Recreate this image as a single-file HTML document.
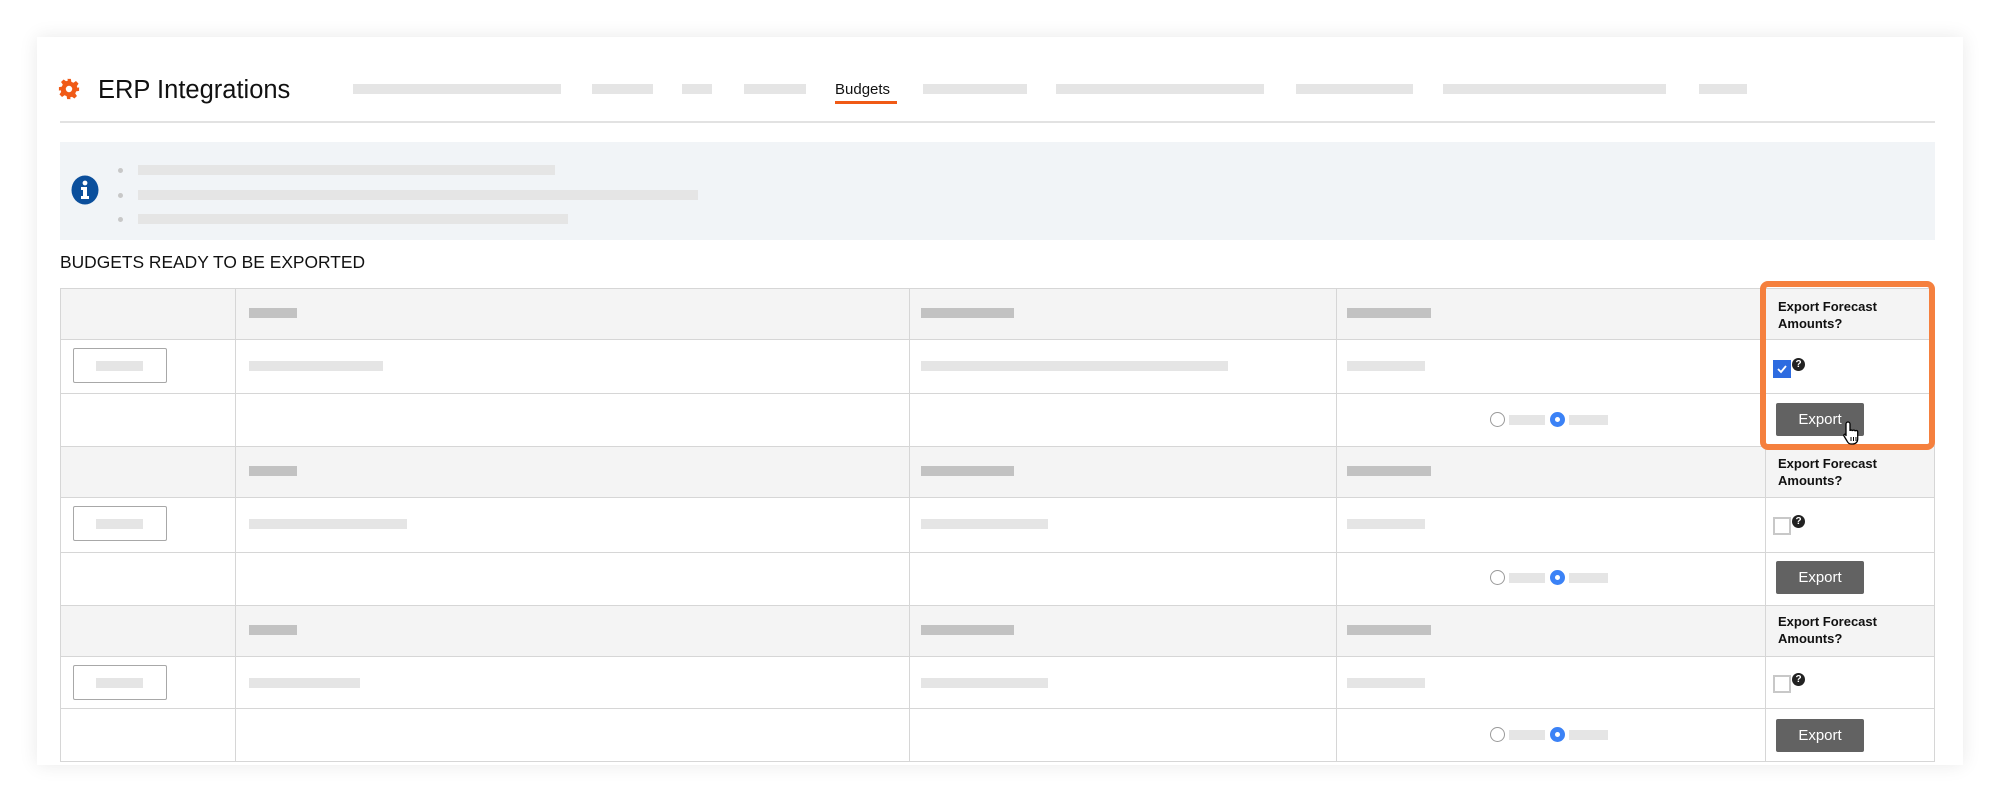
<!DOCTYPE html>
<html><head><meta charset="utf-8"><style>
*{margin:0;padding:0;box-sizing:border-box}
body{width:2000px;height:802px;background:#fff;position:relative;overflow:hidden;font-family:"Liberation Sans",Arial,sans-serif}
.a{position:absolute}
.card{left:37px;top:37px;width:1926px;height:728px;background:#fff;box-shadow:0 0 18px rgba(0,0,0,.09)}
.nb{height:10px;top:84px;background:#e5e5e5}
.lb{background:#e5e5e5;height:10px}
.db{background:#c2c2c2;height:10px}
.hl{background:#d6d6d6;height:1px}
.vl{background:#d6d6d6;width:1px;top:288px;height:473px}
.gr{background:#f4f4f4}
.btn0{width:94px;height:35px;border:1px solid #a8a8a8;border-radius:2px;background:#fff}
.eh{font-size:13px;font-weight:bold;line-height:17px;color:#111;left:1778px}
.cb{left:1773px;width:18px;height:18px;border:2px solid #c8c8c8;background:#fff}
.q{width:13px;height:13px;border-radius:50%;background:#222;color:#fff;font-size:10px;font-weight:bold;text-align:center;line-height:13px;left:1792px}
.ex{left:1776px;width:88px;height:33px;background:#626262;color:#fff;font-size:15px;text-align:center;line-height:33px;border-radius:2px}
.r1{left:1490px;width:15px;height:15px;border-radius:50%;border:1.5px solid #9a9a9a;background:#fff}
.r2{left:1550px;width:15px;height:15px;border-radius:50%;background:#3b82f6}
.r2:after{content:"";position:absolute;left:5px;top:5px;width:5px;height:5px;border-radius:50%;background:#fff}
</style></head><body>
<div class="a card"></div>
<svg class="a" style="left:58px;top:78px" width="22" height="22" viewBox="0 0 24 24"><path fill="#f05a16" d="M10 1h4l.6 3.2 2.3 1 2.7-1.9 2.8 2.8-1.9 2.7 1 2.3L23 10v4l-3.2.6-1 2.3 1.9 2.7-2.8 2.8-2.7-1.9-2.3 1L14 23h-4l-.6-3.2-2.3-1-2.7 1.9-2.8-2.8 1.9-2.7-1-2.3L1 14v-4l3.2-.6 1-2.3-1.9-2.7 2.8-2.8 2.7 1.9 2.3-1zM12 8.5a3.5 3.5 0 100 7 3.5 3.5 0 000-7z"/></svg>
<div class="a" style="left:98px;top:76px;font-size:25.5px;color:#111">ERP Integrations</div>
<div class="a nb" style="left:353px;width:208px"></div>
<div class="a nb" style="left:592px;width:61px"></div>
<div class="a nb" style="left:682px;width:30px"></div>
<div class="a nb" style="left:744px;width:62px"></div>
<div class="a" style="left:835px;top:81px;font-size:15px;color:#111">Budgets</div>
<div class="a" style="left:835px;top:101px;width:62px;height:3px;background:#f05a16"></div>
<div class="a nb" style="left:923px;width:104px"></div>
<div class="a nb" style="left:1056px;width:208px"></div>
<div class="a nb" style="left:1296px;width:117px"></div>
<div class="a nb" style="left:1443px;width:223px"></div>
<div class="a nb" style="left:1699px;width:48px"></div>
<div class="a" style="left:60px;top:121px;width:1875px;height:2px;background:#e2e2e2"></div>
<div class="a" style="left:60px;top:142px;width:1875px;height:98px;background:#f1f4f7"></div>
<svg class="a" style="left:71px;top:175px" width="28" height="30" viewBox="0 0 28 30"><ellipse cx="14" cy="15" rx="13.5" ry="14.5" fill="#0b4f9c"/><circle cx="14" cy="8" r="2.4" fill="#fff"/><path d="M10 12h6v9h2v3h-8v-3h2v-6h-2z" fill="#fff"/></svg>
<div class="a" style="left:118px;top:168px;width:5px;height:5px;border-radius:50%;background:#c8c8c8"></div>
<div class="a" style="left:118px;top:193px;width:5px;height:5px;border-radius:50%;background:#c8c8c8"></div>
<div class="a" style="left:118px;top:217px;width:5px;height:5px;border-radius:50%;background:#c8c8c8"></div>
<div class="a lb" style="left:138px;top:165px;width:417px"></div>
<div class="a lb" style="left:138px;top:190px;width:560px"></div>
<div class="a lb" style="left:138px;top:214px;width:430px"></div>
<div class="a" style="left:60px;top:252px;font-size:17.4px;color:#111">BUDGETS READY TO BE EXPORTED</div>
<div class="a gr" style="left:60px;top:288px;width:1875px;height:51px"></div>
<div class="a gr" style="left:60px;top:446px;width:1875px;height:51px"></div>
<div class="a gr" style="left:60px;top:605px;width:1875px;height:51px"></div>
<div class="a hl" style="left:60px;top:288px;width:1875px"></div>
<div class="a hl" style="left:60px;top:339px;width:1875px"></div>
<div class="a hl" style="left:60px;top:393px;width:1875px"></div>
<div class="a hl" style="left:60px;top:446px;width:1875px"></div>
<div class="a hl" style="left:60px;top:497px;width:1875px"></div>
<div class="a hl" style="left:60px;top:552px;width:1875px"></div>
<div class="a hl" style="left:60px;top:605px;width:1875px"></div>
<div class="a hl" style="left:60px;top:656px;width:1875px"></div>
<div class="a hl" style="left:60px;top:708px;width:1875px"></div>
<div class="a hl" style="left:60px;top:761px;width:1875px"></div>
<div class="a vl" style="left:60px"></div>
<div class="a vl" style="left:235px"></div>
<div class="a vl" style="left:909px"></div>
<div class="a vl" style="left:1336px"></div>
<div class="a vl" style="left:1765px"></div>
<div class="a vl" style="left:1934px"></div>
<div class="a db" style="left:249px;top:308px;width:48px"></div><div class="a db" style="left:921px;top:308px;width:93px"></div><div class="a db" style="left:1347px;top:308px;width:84px"></div>
<div class="a db" style="left:249px;top:466px;width:48px"></div><div class="a db" style="left:921px;top:466px;width:93px"></div><div class="a db" style="left:1347px;top:466px;width:84px"></div>
<div class="a db" style="left:249px;top:625px;width:48px"></div><div class="a db" style="left:921px;top:625px;width:93px"></div><div class="a db" style="left:1347px;top:625px;width:84px"></div>
<div class="a btn0" style="left:73px;top:348px"></div><div class="a lb" style="left:96px;top:361px;width:47px"></div>
<div class="a lb" style="left:249px;top:361px;width:134px"></div><div class="a lb" style="left:921px;top:361px;width:307px"></div><div class="a lb" style="left:1347px;top:361px;width:78px"></div>
<div class="a btn0" style="left:73px;top:506px"></div><div class="a lb" style="left:96px;top:519px;width:47px"></div>
<div class="a lb" style="left:249px;top:519px;width:158px"></div><div class="a lb" style="left:921px;top:519px;width:127px"></div><div class="a lb" style="left:1347px;top:519px;width:78px"></div>
<div class="a btn0" style="left:73px;top:665px"></div><div class="a lb" style="left:96px;top:678px;width:47px"></div>
<div class="a lb" style="left:249px;top:678px;width:111px"></div><div class="a lb" style="left:921px;top:678px;width:127px"></div><div class="a lb" style="left:1347px;top:678px;width:78px"></div>
<div class="a r1" style="top:412px"></div><div class="a lb" style="left:1509px;top:415px;width:36px"></div><div class="a r2" style="top:412px"></div><div class="a lb" style="left:1569px;top:415px;width:39px"></div>
<div class="a r1" style="top:570px"></div><div class="a lb" style="left:1509px;top:573px;width:36px"></div><div class="a r2" style="top:570px"></div><div class="a lb" style="left:1569px;top:573px;width:39px"></div>
<div class="a r1" style="top:727px"></div><div class="a lb" style="left:1509px;top:730px;width:36px"></div><div class="a r2" style="top:727px"></div><div class="a lb" style="left:1569px;top:730px;width:39px"></div>
<div class="a eh" style="top:298px">Export Forecast<br>Amounts?</div>
<div class="a eh" style="top:455px">Export Forecast<br>Amounts?</div>
<div class="a eh" style="top:613px">Export Forecast<br>Amounts?</div>
<div class="a cb" style="top:360px;background:#2d6be0;border-color:#2d6be0"><svg width="14" height="14" viewBox="0 0 14 14" style="position:absolute;left:0;top:0"><path d="M3 7l3 3 5-6" stroke="#fff" stroke-width="1.8" fill="none"/></svg></div>
<div class="a q" style="top:358px">?</div>
<div class="a cb" style="top:517px"></div><div class="a q" style="top:515px">?</div>
<div class="a cb" style="top:675px"></div><div class="a q" style="top:673px">?</div>
<div class="a ex" style="top:403px">Export</div>
<div class="a ex" style="top:561px">Export</div>
<div class="a ex" style="top:719px">Export</div>
<div class="a" style="left:1760px;top:281px;width:175px;height:169px;border:6px solid #f5803e;border-radius:8px"></div>
<svg class="a" style="left:1842px;top:420px" width="20" height="26" viewBox="0 0 20 26"><path d="M6 2c1 0 2 .8 2 2v7c0-1 2-1.5 2.5 0 0-1 2.3-1.4 2.6.2.3-1 2.4-1 2.6.5V19c0 3-2 5-5 5H9c-2 0-3-1-4-3l-3-5c-.7-1.2.8-2.4 1.8-1.4L4 16V4c0-1.2 1-2 2-2z" fill="#fff" stroke="#000" stroke-width="1.3"/><path d="M9 17v4M11.5 17v4M14 17v4" stroke="#000" stroke-width="1"/></svg>
</body></html>
